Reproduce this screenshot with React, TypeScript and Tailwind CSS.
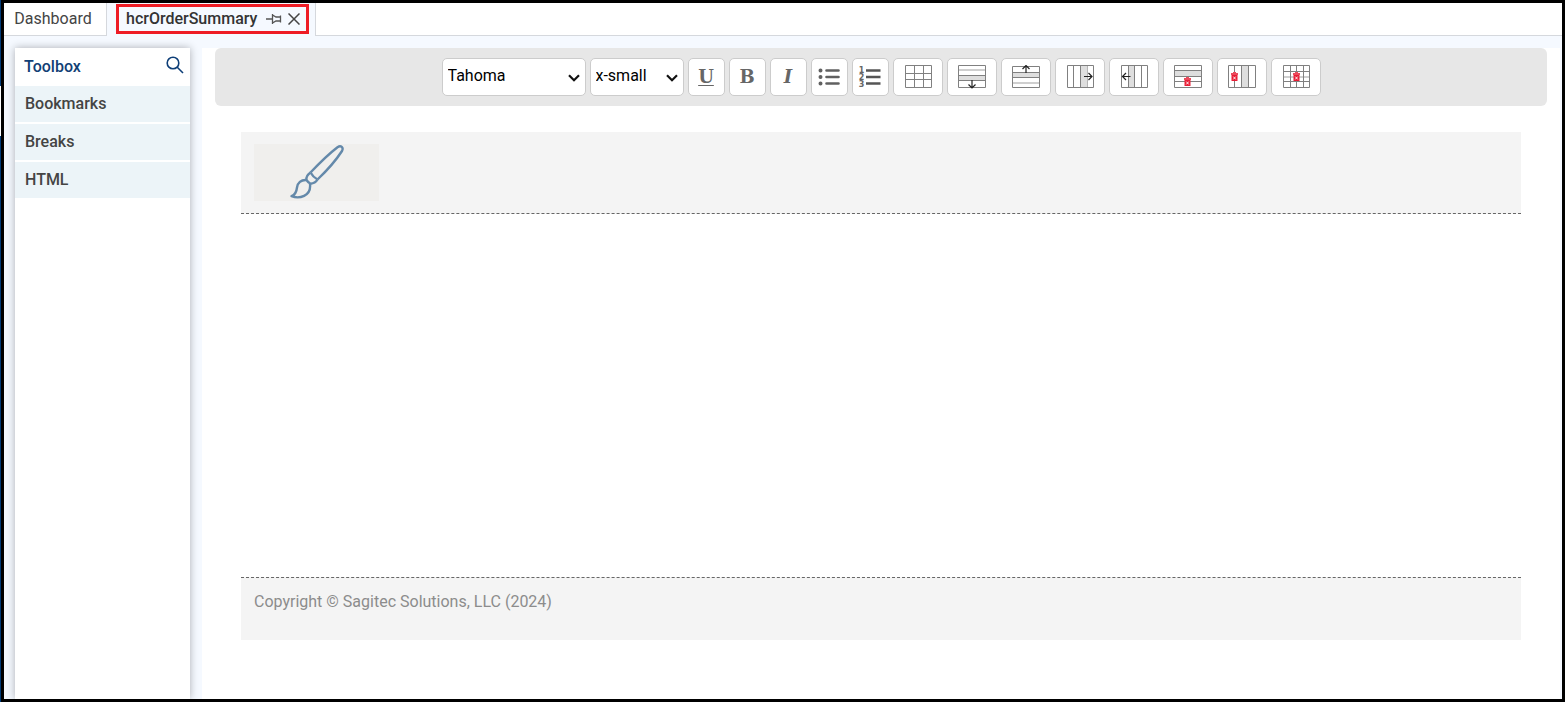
import React from 'react'

const TrashIcon: React.FC<{ x: number; y: number }> = ({ x, y }) => (
  <g transform={`translate(${x} ${y})`} stroke="none">
    <path d="M0 1H7V3H0ZM2 0H5V1H2Z" fill="#ea4a5c" />
    <path d="M0.5 3H6.5V9H0.5Z" fill="#e81c34" />
    <path d="M2.3 4.6L4.7 7.4M4.7 4.6L2.3 7.4" stroke="#fff" strokeWidth="0.9" />
  </g>
)

const TableIcon: React.FC<{ children: React.ReactNode }> = ({ children }) => (
  <svg width="28" height="24" viewBox="0 0 28 24" fill="none" stroke="#808080" aria-hidden="true">
    {children}
  </svg>
)

// Table commands, in toolbar order
const tableTools = [
  {
    label: 'Insert table',
    icon: <path d="M1.5 0.5H27.5V22.5H1.5ZM10.5 0V22M19.5 0V22M1 8.5H27M1 14.5H27" />,
  },
  {
    label: 'Insert row below',
    icon: (
      <>
        <path d="M1 11H27V15H1Z" fill="#dedede" stroke="none" />
        <path d="M1 5H27" stroke="#cfcfcf" strokeWidth="2" />
        <path d="M0.5 0.5H27.5V22.5H0.5ZM1 10.5H27M1 15.5H27" />
        <path d="M14 15V23M10.5 19.5L14 23L17.5 19.5" stroke="#222" strokeWidth="1.2" />
      </>
    ),
  },
  {
    label: 'Insert row above',
    icon: (
      <>
        <path d="M1 7H27V12H1Z" fill="#dedede" stroke="none" />
        <path d="M1 18H27" stroke="#cfcfcf" strokeWidth="2" />
        <path d="M0.5 1.5H27.5V22.5H0.5ZM1 7.5H27M1 12.5H27" />
        <path d="M14 8V0.5M10.5 4L14 0.5L17.5 4" stroke="#222" strokeWidth="1.2" />
      </>
    ),
  },
  {
    label: 'Insert column right',
    icon: (
      <>
        <path d="M14 1H21V22H14Z" fill="#dedede" stroke="none" />
        <path d="M21.5 1V22" stroke="#b5b5b5" />
        <path d="M1.5 0.5H27.5V22.5H1.5ZM7.5 1V22M14.5 1V22" />
        <path d="M18 11.5H26M22.5 8L26 11.5L22.5 15" stroke="#222" strokeWidth="1.2" />
      </>
    ),
  },
  {
    label: 'Insert column left',
    icon: (
      <>
        <path d="M8 1H14V22H8Z" fill="#dedede" stroke="none" />
        <path d="M1.5 0.5H27.5V22.5H1.5ZM8.5 1V22M14.5 1V22M21.5 1V22" />
        <path d="M10.5 11.5H2.5M6 8L2.5 11.5L6 15" stroke="#222" strokeWidth="1.2" />
      </>
    ),
  },
  {
    label: 'Delete row',
    icon: (
      <>
        <path d="M1 6H27V11H1Z" fill="#dedede" stroke="none" />
        <path d="M0.5 0.5H27.5V22.5H0.5ZM1 5.5H27M1 11.5H27M1 16.5H27" />
        <TrashIcon x={10} y={12} />
      </>
    ),
  },
  {
    label: 'Delete column',
    icon: (
      <>
        <path d="M13 1H20V22H13Z" fill="#dedede" stroke="none" />
        <path d="M0.5 0.5H27.5V22.5H0.5ZM6.5 1V22M13.5 1V22M20.5 1V22" />
        <TrashIcon x={3} y={7} />
      </>
    ),
  },
  {
    label: 'Delete table',
    icon: (
      <>
        <path d="M1 12H27" stroke="#cfcfcf" strokeWidth="2" />
        <path d="M1.5 0.5H27.5V22.5H1.5ZM8.5 1V22M14.5 1V22M21.5 1V22M1 6.5H27M1 16.5H27" />
        <TrashIcon x={11} y={7} />
      </>
    ),
  },
]

const toolboxItems = ['Bookmarks', 'Breaks', 'HTML']

const TabBar: React.FC = () => (
  <nav className="flex h-[33px] shrink-0 text-base">
    <button className="w-[103px] border-r border-b border-[#d5d8dd] bg-white pr-1 text-[#444]">
      Dashboard
    </button>
    <div className="pt-px pr-1.5 pl-[9px]">
      <div className="flex h-[30px] w-[193px] items-center border-3 border-[#ee1c25] pl-[7px]">
        <button className="font-medium text-[#333]">hcrOrderSummary</button>
        <button aria-label="Pin tab" className="ml-2">
          <svg width="17" height="12" viewBox="0 0 17 12" fill="none" stroke="#555" strokeWidth="1.3" aria-hidden="true">
            <path d="M1 6H7M7.5 1V11M7.5 2L11 4H15.5V8H11L7.5 10M15.5 2.5V9.5" />
          </svg>
        </button>
        <button aria-label="Close tab" className="ml-1.5">
          <svg width="12" height="12" viewBox="0 0 12 12" fill="none" stroke="#444" strokeWidth="1.5" aria-hidden="true">
            <path d="M0.5 0.5L11.5 11.5M11.5 0.5L0.5 11.5" />
          </svg>
        </button>
      </div>
    </div>
    <div className="flex-1 border-b border-l border-[#d5d8dd] bg-white" />
  </nav>
)

const Toolbox: React.FC = () => (
  <aside className="w-[175px] shrink-0 bg-white shadow-[0_0_8px_rgba(0,0,0,0.3)]">
    <div className="flex h-[38px] items-center justify-between pr-1.5 pl-[9px]">
      <h2 className="font-medium text-[#123f75]">Toolbox</h2>
      <button aria-label="Search toolbox" className="pb-1">
        <svg width="18" height="18" viewBox="0 0 18 18" fill="none" stroke="#0e3f78" strokeWidth="1.6" aria-hidden="true">
          <circle cx="7" cy="7" r="5.8" />
          <path d="M11 11L17 17" />
        </svg>
      </button>
    </div>
    <ul className="flex flex-col gap-0.5">
      {toolboxItems.map((item) => (
        <li key={item}>
          <button className="h-9 w-full bg-[#ecf4f8] px-2.5 text-left font-medium text-[#444]">
            {item}
          </button>
        </li>
      ))}
    </ul>
  </aside>
)

const controlClass = 'h-[38px] rounded-[5px] border border-[#ccc] bg-white'
const formatClass = `${controlClass} flex w-[37px] items-center justify-center text-[#666]`
const letterClass = "font-['DejaVu_Serif',serif] text-lg leading-5 font-bold"

const Select: React.FC<{ label: string; width: string; options: string[] }> = ({ label, width, options }) => (
  <div className={`relative ${width}`}>
    <select aria-label={label} className={`${controlClass} w-full appearance-none pb-0.5 pl-[5px] text-black`}>
      {options.map((option) => (
        <option key={option}>{option}</option>
      ))}
    </select>
    <svg className="pointer-events-none absolute top-4 right-1.5" width="12" height="8" viewBox="0 0 12 8" fill="none" stroke="#111" strokeWidth="2.2" aria-hidden="true">
      <path d="M1 1.2L6 6.2L11 1.2" />
    </svg>
  </div>
)

const Toolbar: React.FC = () => (
  <div className="flex min-h-[58px] flex-wrap items-center justify-center gap-1 rounded-md bg-[#e7e7e7]">
    <Select label="Font family" width="w-36" options={['Tahoma', 'Arial']} />
    <Select label="Font size" width="w-[94px]" options={['x-small', 'small']} />
    <button aria-label="Underline" className={formatClass}>
      <span className={`${letterClass} underline decoration-1 underline-offset-2`}>U</span>
    </button>
    <button aria-label="Bold" className={formatClass}>
      <span className={letterClass}>B</span>
    </button>
    <button aria-label="Italic" className={formatClass}>
      <span className={`${letterClass} italic`}>I</span>
    </button>
    <button aria-label="Bulleted list" className={formatClass}>
      <svg width="22" height="18" viewBox="0 0 22 18" fill="none" stroke="#606060" strokeWidth="2.6" strokeLinecap="round" aria-hidden="true">
        <path d="M8.500 2.500H20.500M8.500 9H20.500M8.500 15.500H20.500" />
        <path d="M2.500 2.500H2.510M2.500 9H2.510M2.500 15.500H2.510" strokeWidth="4" />
      </svg>
    </button>
    <button aria-label="Numbered list" className={formatClass}>
      <span className="flex flex-col font-['DejaVu_Sans',sans-serif] text-[8px] leading-[7px] font-bold" aria-hidden="true">
        <span>1</span>
        <span>2</span>
        <span>3</span>
      </span>
      <svg width="17" height="18" viewBox="0 0 17 18" fill="none" stroke="#555" strokeWidth="2.6" aria-hidden="true">
        <path d="M2 2.500H16.500M2 9H16.500M2 15.500H16.500" />
      </svg>
    </button>
    {tableTools.map((tool) => (
      <button
        key={tool.label}
        aria-label={tool.label}
        className={`${controlClass} flex w-[50px] items-center justify-center`}
      >
        <TableIcon>{tool.icon}</TableIcon>
      </button>
    ))}
  </div>
)

const Brush: React.FC = () => (
  <svg width="54" height="55" viewBox="0 0 54 55" fill="none" stroke="#6489aa" strokeWidth="2.4" strokeLinejoin="round" aria-hidden="true">
    <path d="M20.5 27.5C29 18.5 38 9.5 47.5 2.2C51 0 53.800 2.5 52 6C45.5 16 37 25.5 27.5 34.5" />
    <path d="M20.5 27.5C17.5 29.5 16 32 16.5 35C17.5 36.5 19 38 20.5 38.8C23.5 38.5 26 37 27.5 34.5" />
    <path d="M20.5 27.5C22.5 31 24.5 33 27.5 34.5" />
    <path d="M16.5 35C11 34.5 7.5 38 7 42.5C6.5 47 5 50 1.5 51.2C9 54 21.5 51.5 20 38.8" />
  </svg>
)

export default function App() {
  return (
    <div className="flex min-h-screen font-['Roboto',sans-serif] text-base">
      <div className="flex w-px shrink-0 flex-col bg-[#003a78]">
        <div className="mt-[86px] h-[50px] bg-white" />
      </div>
      <div className="flex min-w-0 flex-1 flex-col border-3 border-black bg-[#f5f9ff]">
        <TabBar />
        <div className="flex flex-1 gap-3 overflow-hidden pt-3 pr-0.5 pl-[11px]">
          <Toolbox />
          <main className="flex min-w-0 flex-1 flex-col bg-white px-[13px]">
            <Toolbar />
            <article className="mx-[26px] mt-[26px] mb-[59px] flex flex-1 flex-col">
              <header className="border-b border-dashed border-[#666] bg-[#f4f4f4] px-[13px] py-3">
                <div className="flex h-[57px] w-[125px] items-center justify-center bg-[#f0efed]">
                  <Brush />
                </div>
              </header>
              <section className="flex-1" />
              <footer className="h-[63px] border-t border-dashed border-[#666] bg-[#f4f4f4] px-[13px] pt-3 text-[#8c8c8c]">
                Copyright © Sagitec Solutions, LLC (2024)
              </footer>
            </article>
          </main>
        </div>
      </div>
    </div>
  )
}
